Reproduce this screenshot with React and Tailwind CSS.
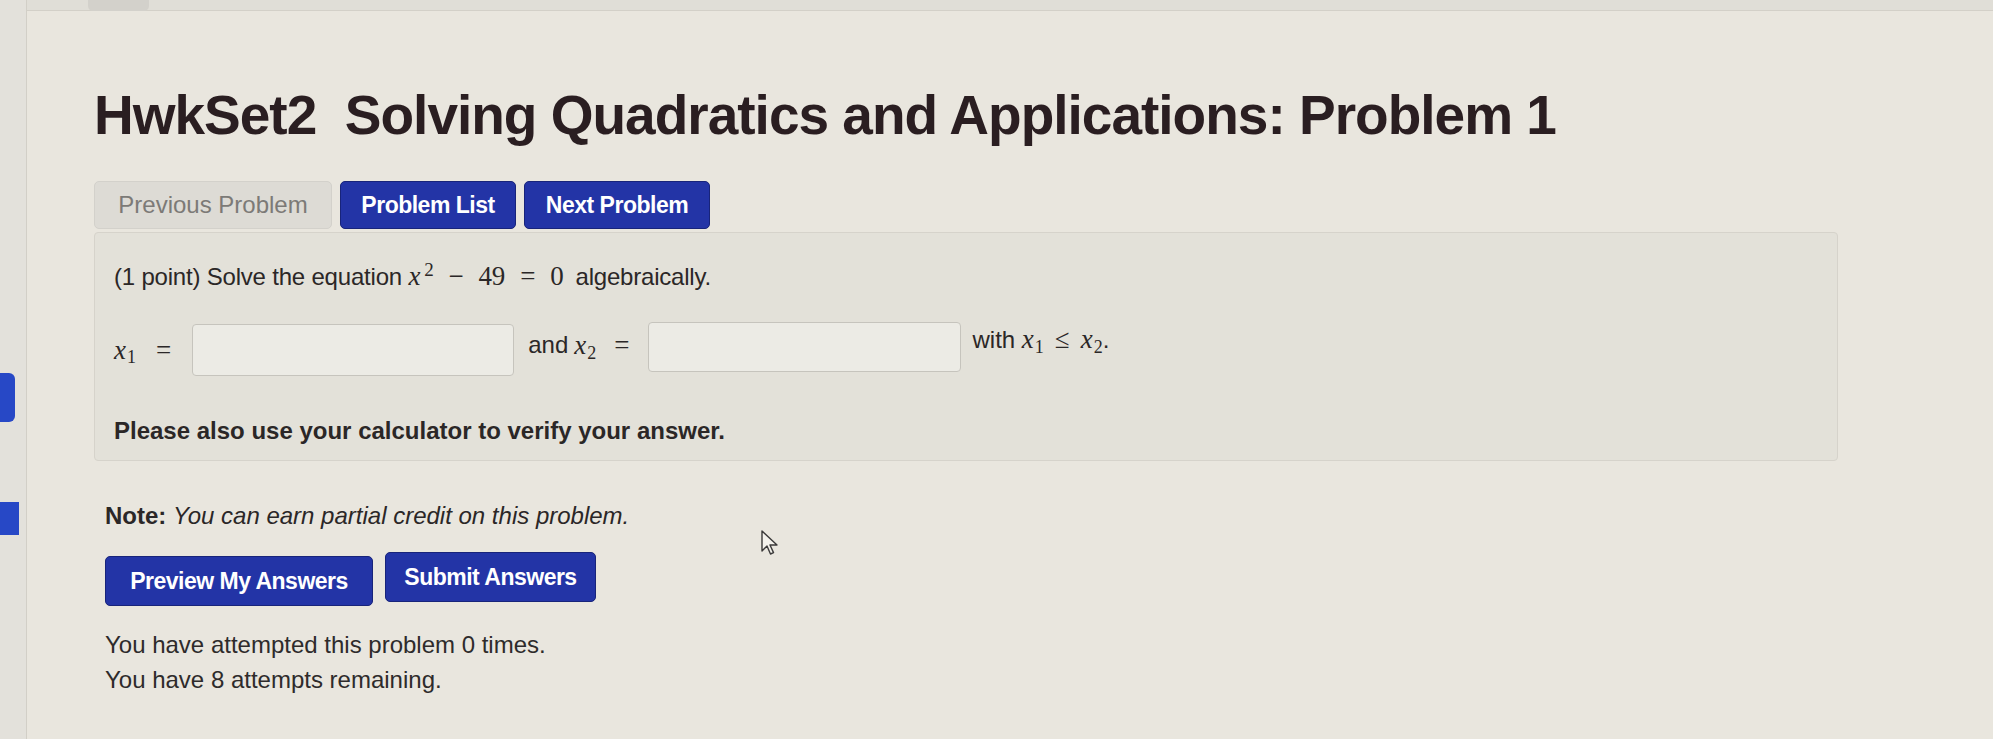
import React from "react";

const mathFont = "font-['Liberation_Serif','DejaVu_Serif',serif]";

const Var = ({ sub, sup }) => (
  <span className={`${mathFont} text-[27px]`}>
    <i>x</i>
    {sub && <sub className="text-[18px] ml-[1px]">{sub}</sub>}
    {sup && <sup className="text-[19px] ml-[4px]">{sup}</sup>}
  </span>
);

const Op = ({ children, cls = "mx-[10px]" }) => (
  <span className={`${mathFont} text-[27px] ${cls}`}>{children}</span>
);

const navButtons = [
  { label: "Previous Problem", width: "w-[238px]", disabled: true },
  { label: "Problem List", width: "w-[176px]" },
  { label: "Next Problem", width: "w-[186px]" },
];

const Cursor = () => (
  <svg width="20" height="28" viewBox="0 0 20 28" className="absolute left-[733px] top-[529px]">
    <path
      d="M2 2 L2 22 L7 17 L10.5 25 L13.5 23.6 L10 16 L17 16 Z"
      fill="#f4f2ec"
      stroke="#3b3a3a"
      strokeWidth="1.4"
      strokeLinejoin="round"
    />
  </svg>
);

export default function App() {
  return (
    <div className="w-[1993px] h-[739px] overflow-hidden flex bg-[#e9e6de] font-['Liberation_Sans',Arial,sans-serif] text-[#2b2727]">
      {/* side rail */}
      <aside className="w-[27px] shrink-0 border-r border-[#d2cfc7] bg-[#e3e1db] flex flex-col">
        <div className="h-[373px]" />
        <div className="h-[49px] w-[15px] rounded-r-[6px] bg-[#2748c6]" />
        <div className="h-[80px]" />
        <div className="h-[33px] w-[19px] bg-[#2748c6]" />
      </aside>

      <main className="relative flex-1 flex flex-col">
        <div className="h-[11px] shrink-0 border-b border-[#d3d0c8] bg-[#e0ded7] pl-[61px]">
          <div className="w-[61px] h-[11px] rounded-b-[5px] bg-[#d3d1cb]" />
        </div>

        <div className="pl-[67px]">
          <h1 className="mt-[77px] text-[55px] leading-none font-bold tracking-[-1px] text-[#2a1e21] whitespace-pre">
            HwkSet2  Solving Quadratics and Applications: Problem 1
          </h1>

          <div className="mt-[38px] flex gap-[8px]">
            {navButtons.map((b) => (
              <button
                key={b.label}
                className={
                  b.disabled
                    ? `${b.width} h-[48px] rounded-[5px] bg-[#dddbd5] border border-[#d3d1cb] text-[#7c7a77] text-[24px]`
                    : `${b.width} h-[48px] rounded-[5px] bg-[#2334a6] border border-[#18247a] text-white text-[23px] font-bold tracking-[-0.5px]`
                }
              >
                {b.label}
              </button>
            ))}
          </div>

          <div className="mt-[3px] w-[1744px] rounded-[4px] border border-[#d6d3cb] bg-[#e3e1d9] pt-[29px] pb-[15px] px-[19px] text-[24px]">
            <p className="leading-[28px] tracking-[-0.2px]">
              (1 point) Solve the equation <Var sup="2" />
              <Op cls="mx-[15px]">−</Op>
              <Op cls="">49</Op>
              <Op cls="mx-[15px]">=</Op>
              <Op cls="mr-[12px]">0</Op>algebraically.
            </p>

            <div className="mt-[34px] flex items-center h-[50px]">
              <Var sub="1" />
              <Op cls="ml-[20px]">=</Op>
              <input className="ml-[21px] w-[322px] h-[52px] rounded-[4px] border border-[#c6c4bd] bg-[#ecebe5]" />
              <span className="ml-[14px] self-start mt-[2px]">and </span>
              <span className="ml-[6px] self-start"><Var sub="2" /></span>
              <Op cls="ml-[18px] self-start">=</Op>
              <input className="ml-[19px] w-[313px] h-[50px] rounded-[4px] border border-[#c6c4bd] bg-[#ecebe5] self-start -mt-[3px]" />
              <span className="ml-[11px] self-start -mt-[6px]">
                with <Var sub="1" /><Op cls="mx-[11px]">≤</Op><Var sub="2" />.
              </span>
            </div>

            <p className="mt-[42px] leading-[28px] font-bold text-[24px]">
              Please also use your calculator to verify your answer.
            </p>
          </div>

          <div className="pl-[11px] text-[24px]">
            <p className="mt-[41px] leading-[28px]">
              <b>Note:</b> <i>You can earn partial credit on this problem.</i>
            </p>

            <div className="mt-[22px] flex gap-[12px] items-start">
              <button className="w-[268px] h-[50px] mt-[4px] rounded-[5px] bg-[#2334a6] border border-[#18247a] text-white text-[23px] font-bold tracking-[-0.5px]">
                Preview My Answers
              </button>
              <button className="w-[211px] h-[50px] rounded-[5px] bg-[#2334a6] border border-[#18247a] text-white text-[23px] font-bold tracking-[-0.5px]">
                Submit Answers
              </button>
            </div>

            <div className="mt-[21px] leading-[35px] text-[#2e2b2b]">
              <p>You have attempted this problem 0 times.</p>
              <p>You have 8 attempts remaining.</p>
            </div>
          </div>
        </div>

        <Cursor />
      </main>
    </div>
  );
}
